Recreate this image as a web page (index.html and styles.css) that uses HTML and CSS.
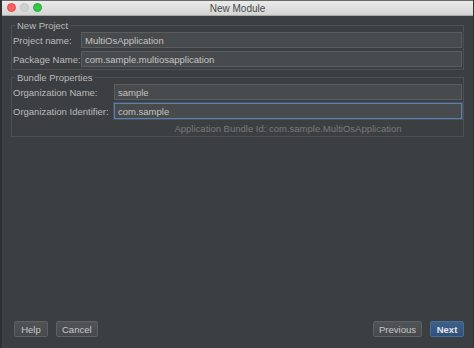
FILE: index.html
```html
<!DOCTYPE html>
<html>
<head>
<meta charset="utf-8">
<title>New Module</title>
<link rel="stylesheet" href="styles.css">
</head>
<body>
<div class="window">
  <div class="titlebar">
    <div class="lights">
      <span class="light red"></span>
      <span class="light gray"></span>
      <span class="light green"></span>
    </div>
    <div class="title">New Module</div>
  </div>
  <div class="content">
    <fieldset class="group">
      <legend>New Project</legend>
      <div class="form form-project">
        <label>Project name:</label>
        <input class="field" value="MultiOsApplication">
        <label>Package Name:</label>
        <input class="field" value="com.sample.multiosapplication">
      </div>
    </fieldset>
    <fieldset class="group group-bundle">
      <legend>Bundle Properties</legend>
      <div class="form form-bundle">
        <label>Organization Name:</label>
        <input class="field" value="sample">
        <label>Organization Identifier:</label>
        <input class="field focused" value="com.sample">
        <span></span>
        <div class="hint">Application Bundle Id: com.sample.MultiOsApplication</div>
      </div>
    </fieldset>
    <div class="footer">
      <div class="btns">
        <button class="btn">Help</button>
        <button class="btn">Cancel</button>
      </div>
      <div class="btns">
        <button class="btn">Previous</button>
        <button class="btn primary">Next</button>
      </div>
    </div>
  </div>
</div>
</body>
</html>
```
FILE: styles.css
```css
* { box-sizing: border-box; }
html, body { margin: 0; padding: 0; }
body {
  width: 474px;
  height: 348px;
  overflow: hidden;
  background: #3c3f41;
  font-family: "Liberation Sans", Arial, sans-serif;
  font-size: 9.5px;
  color: #bbbbbb;
}
.window {
  width: 474px;
  height: 348px;
  display: flex;
  flex-direction: column;
  background: #3c3f41;
  border-left: 2px solid #2e3032;
  border-right: 1px solid #2e3032;
}
.titlebar {
  height: 16px;
  flex: none;
  position: relative;
  background: linear-gradient(#ebebeb, #d4d4d4);
  border-top: 1px solid #6a6a6a;
  border-bottom: 1px solid #a9a9a9;
  display: flex;
  align-items: center;
  justify-content: center;
}
.lights {
  position: absolute;
  left: 5px;
  top: 2px;
  display: flex;
  gap: 4px;
}
.light {
  width: 9px;
  height: 9px;
  border-radius: 50%;
  display: block;
}
.red { background: #fc605c; border: 0.5px solid #de4a45; }
.gray { background: #d0d0d0; border: 0.5px solid #c4c4c4; }
.green { background: #34c84a; border: 0.5px solid #27a93a; }
.title {
  font-size: 10px;
  color: #4a4a4a;
}
.content {
  flex: 1;
  display: flex;
  flex-direction: column;
  padding: 4px 9px 11px 9px;
}
.group {
  margin: 0;
  padding: 0 1px 2px 1px;
  border: 1px solid #4e5153;
}
.group legend {
  padding: 0 2px;
  margin-left: 2px;
  line-height: 11px;
  color: #bbbbbb;
}
.group-bundle { margin-top: 2px; }
.form {
  display: grid;
  row-gap: 3px;
  align-items: center;
  padding-top: 1px;
}
.form-project { grid-template-columns: 68px 1fr; }
.form-bundle { grid-template-columns: 101px 1fr; }
.form label { white-space: nowrap; }
.field {
  height: 16px;
  width: 100%;
  margin: 0;
  border: 1px solid #5a5d5f;
  background: #484b4d;
  color: #c4c4c4;
  font: inherit;
  padding: 0 3px;
  outline: none;
}
.field.focused {
  border-color: #5f7fa5;
  box-shadow: 0 0 0 1px #44546a;
}
.hint {
  text-align: center;
  color: #787878;
  line-height: 11px;
  margin-top: 1px;
}
.footer {
  margin-top: auto;
  display: flex;
  justify-content: space-between;
  padding: 0 0 0 3px;
}
.btns { display: flex; gap: 8px; }
.btn {
  height: 16px;
  min-width: 34px;
  padding: 0 5px;
  margin: 0;
  font: inherit;
  color: #c8c8c8;
  background: linear-gradient(#505456, #46494b);
  border: 1px solid #5e6163;
  border-radius: 2px;
}
.btn.primary {
  color: #e6e6e6;
  font-weight: bold;
  background: linear-gradient(#3d5f8a, #2f5179);
  border-color: #4a6b95;
}
```
